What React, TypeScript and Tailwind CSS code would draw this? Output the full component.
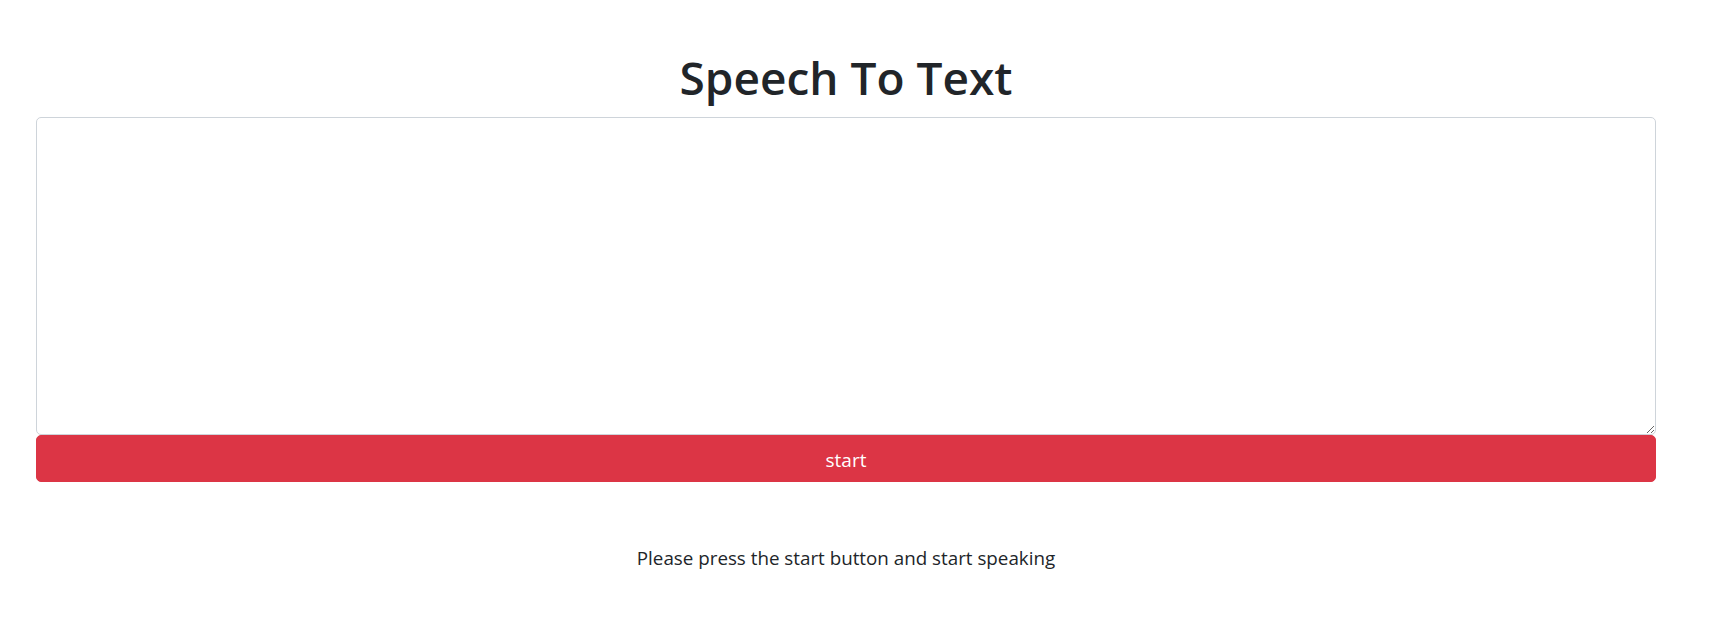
import React from "react";

export default function App() {
  return (
    <div
      className="w-[1692px] bg-white text-[#212529]"
      style={{ fontFamily: '"Segoe UI", "Open Sans", "Noto Sans", sans-serif' }}
    >
      <div className="px-[36px] pt-[47px]">
        <h1 className="m-0 mb-[10px] text-center text-[46px] font-semibold leading-[60px] text-[#212529]">
          Speech To Text
        </h1>
        <textarea
          className="block h-[318px] w-full resize-y rounded-[5px] border border-[#ced4da] bg-white px-[15px] py-[7px] text-[19px] text-[#495057] outline-none"
          aria-label="transcript"
        />
        <button
          type="button"
          className="block h-[47px] w-full rounded-[5px] border border-[#dc3545] bg-[#dc3545] pt-[2px] text-[19px] leading-[30px] text-white"
        >
          start
        </button>
        <p className="m-0 mt-[61px] text-center text-[18.8px] leading-[30px] text-[#212529]">
          Please press the start button and start speaking
        </p>
      </div>
    </div>
  );
}
